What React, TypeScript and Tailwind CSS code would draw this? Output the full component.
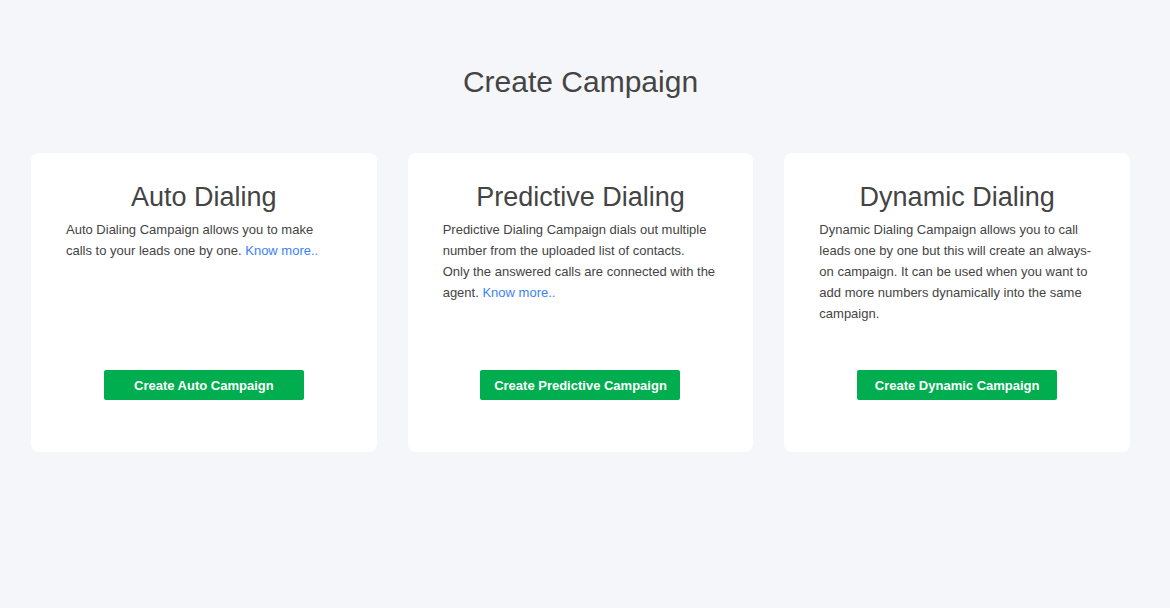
import type { ReactNode } from "react";

const cards: { title: string; text: ReactNode; link: boolean; button: string }[] = [
  {
    title: "Auto Dialing",
    text: "Auto Dialing Campaign allows you to make calls to your leads one by one.",
    link: true,
    button: "Create Auto Campaign",
  },
  {
    title: "Predictive Dialing",
    text: (
      <>
        Predictive Dialing Campaign dials out multiple number from the uploaded list of contacts.
        <br />
        Only the answered calls are connected with the agent.
      </>
    ),
    link: true,
    button: "Create Predictive Campaign",
  },
  {
    title: "Dynamic Dialing",
    text: "Dynamic Dialing Campaign allows you to call leads one by one but this will create an always-on campaign. It can be used when you want to add more numbers dynamically into the same campaign.",
    link: false,
    button: "Create Dynamic Campaign",
  },
];

export default function App() {
  return (
    <div className="min-h-[608px] bg-[#f5f6fa] font-['Liberation_Sans',Arial,sans-serif] text-[#444]">
      <div className="w-[1161px] px-[31px] pt-[62px]">
        <h1 className="text-center text-[30px] leading-[40px] text-[#444]">Create Campaign</h1>
        <div className="mt-[51px] grid grid-cols-3 gap-[31px]">
          {cards.map((c) => (
            <div
              key={c.title}
              className="flex h-[299px] flex-col rounded-lg bg-white px-[35px] pt-[28px] pb-[52px]"
            >
              <h2 className="text-center text-[27px] leading-[32px] text-[#444]">{c.title}</h2>
              <p className="mt-[6px] flex-1 text-[13px] leading-[21px] text-[#444]">
                {c.text}
                {c.link && (
                  <>
                    {" "}
                    <a href="#" className="text-[#3b82f6]">Know more..</a>
                  </>
                )}
              </p>
              <div className="flex justify-center">
                <button className="h-[30px] w-[200px] rounded-[2px] bg-[#00ad4f] pt-px text-[13px] font-bold text-white">
                  {c.button}
                </button>
              </div>
            </div>
          ))}
        </div>
      </div>
    </div>
  );
}
